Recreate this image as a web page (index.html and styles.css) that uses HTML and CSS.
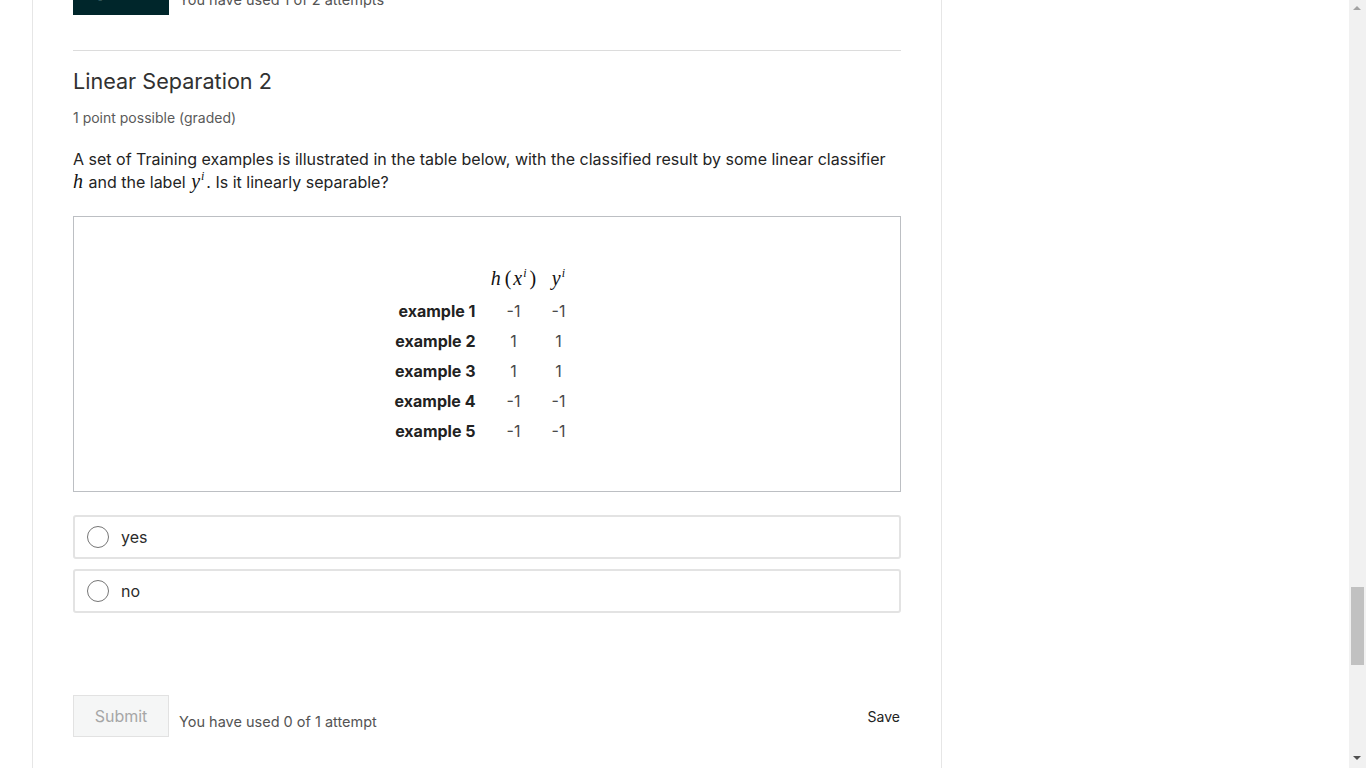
FILE: index.html
```html
<!DOCTYPE html>
<html lang="en">
<head>
<meta charset="utf-8">
<title>Linear Separation 2</title>
<link rel="stylesheet" href="styles.css">
</head>
<body>
<div class="viewport">
  <div class="column">
    <div class="prev-actions">
      <button class="btn-dark">Submit</button>
      <span class="attempts">You have used 1 of 2 attempts</span>
    </div>
    <hr class="divider">
    <h3 class="problem-title">Linear Separation 2</h3>
    <div class="points">1 point possible (graded)</div>
    <p class="prompt">A set of Training examples is illustrated in the table below, with the classified result by some linear classifier <span class="math inl-h">h</span> and the label <span class="math inl-y">y<sup>i</sup></span>. Is it linearly separable?</p>
    <div class="table-box">
      <table class="data">
        <thead>
          <tr>
            <th class="lbl"></th>
            <th class="c1"><span class="math">h</span><span class="mathup paren-l">(</span><span class="math">x<sup>i</sup></span><span class="mathup paren-r">)</span></th>
            <th class="c2"><span class="math">y<sup>i</sup></span></th>
          </tr>
        </thead>
        <tbody>
          <tr><th class="lbl">example 1</th><td class="c1">-1</td><td class="c2">-1</td></tr>
          <tr><th class="lbl">example 2</th><td class="c1">1</td><td class="c2">1</td></tr>
          <tr><th class="lbl">example 3</th><td class="c1">1</td><td class="c2">1</td></tr>
          <tr><th class="lbl">example 4</th><td class="c1">-1</td><td class="c2">-1</td></tr>
          <tr><th class="lbl">example 5</th><td class="c1">-1</td><td class="c2">-1</td></tr>
        </tbody>
      </table>
    </div>
    <div class="choices">
      <label class="choice"><span class="radio"></span><span class="choice-text">yes</span></label>
      <label class="choice"><span class="radio"></span><span class="choice-text">no</span></label>
    </div>
    <div class="actions">
      <div class="actions-left">
        <button class="btn-submit">Submit</button>
        <span class="attempts">You have used 0 of 1 attempt</span>
      </div>
      <span class="save">Save</span>
    </div>
  </div>
</div>
<div class="scrollbar">
  <div class="sb-arrow-up"></div>
  <div class="sb-thumb"></div>
  <div class="sb-arrow-down"></div>
</div>
</body>
</html>
```

FILE: styles.css
```css
html, body {
  margin: 0;
  padding: 0;
  height: 100%;
  overflow: hidden;
  background: #ffffff;
}
body {
  font-family: Inter, "Noto Sans", "Liberation Sans", sans-serif;
  color: #222222;
}
.viewport {
  width: 1349px;
  height: 768px;
  overflow: hidden;
}
.column {
  box-sizing: border-box;
  width: 910px;
  margin-left: 32px;
  margin-top: -27px;
  min-height: 900px;
  padding: 0 40px;
  border-left: 1px solid #e6e6e6;
  border-right: 1px solid #e6e6e6;
}
.prev-actions {
  display: flex;
  align-items: center;
  height: 42px;
}
.btn-dark {
  width: 96px;
  height: 42px;
  border: none;
  background: #00262b;
  color: #a9c9c4;
  font-family: inherit;
  font-size: 16px;
  padding: 0;
}
.attempts {
  margin-left: 10px;
  margin-top: 10px;
  font-size: 14.5px;
  color: #545454;
}
.divider {
  margin: 35px 0 0 0;
  border: none;
  border-top: 1px solid #dcdcdc;
  height: 0;
}
.problem-title {
  margin: 16px 0 0 0;
  font-size: 21.6px;
  line-height: 28px;
  font-weight: 400;
  color: #313131;
}
.points {
  margin-top: 13px;
  font-size: 14px;
  line-height: 20px;
  color: #5a5a5a;
}
.prompt {
  margin: 20px 0 0 0;
  padding-right: 10px;
  font-size: 16px;
  line-height: 23px;
  color: #242424;
}
.math {
  font-family: "Liberation Serif", "DejaVu Serif", serif;
  font-style: italic;
  font-size: 20px;
  color: #111111;
}
.inl-h, .inl-y {
  line-height: 1;
}
.inl-h {
  padding-right: 1px;
}
.inl-y {
  padding: 0 2px 0 1px;
}
.math sup {
  font-size: 12px;
  vertical-align: 8px;
  line-height: 0;
  padding-left: 1px;
}
.mathup {
  font-family: "Liberation Serif", "DejaVu Serif", serif;
  font-size: 20px;
  color: #111111;
}
.paren-l {
  padding: 0 2px 0 4px;
}
.paren-r {
  padding-left: 3px;
}
.table-box {
  margin-top: 22px;
  box-sizing: border-box;
  height: 276px;
  border: 1px solid #bcbfc3;
  padding-top: 43px;
}
.data {
  margin: 0 auto;
  border-collapse: collapse;
  font-size: 16px;
}
.data tr {
  height: 30px;
}
.data thead tr {
  height: 36px;
}
.data th, .data td {
  padding: 0;
}
.data .lbl {
  width: 80px;
  padding: 0 13px 0 9px;
  text-align: right;
  font-weight: 700;
  color: #222222;
  white-space: nowrap;
}
.data .c1 {
  width: 50px;
  text-align: center;
  color: #4a4a4a;
  font-weight: 400;
}
.data .c2 {
  width: 40px;
  padding-right: 10px;
  text-align: center;
  color: #4a4a4a;
  font-weight: 400;
}
.data thead .c1, .data thead .c2 {
  white-space: nowrap;
}
.choices {
  margin-top: 23px;
  display: flex;
  flex-direction: column;
  gap: 10px;
}
.choice {
  box-sizing: border-box;
  height: 44px;
  border: 2px solid #e3e3e3;
  border-radius: 3px;
  display: flex;
  align-items: center;
  padding-left: 12px;
}
.radio {
  box-sizing: border-box;
  width: 22px;
  height: 22px;
  border: 1px solid #767676;
  border-radius: 50%;
  background: #ffffff;
}
.choice-text {
  margin-left: 12px;
  font-size: 16px;
  color: #2b2b2b;
}
.actions {
  margin-top: 82px;
  display: flex;
  justify-content: space-between;
  align-items: center;
}
.actions-left {
  display: flex;
  align-items: center;
}
.btn-submit {
  box-sizing: border-box;
  width: 96px;
  height: 42px;
  border: 1px solid #e2e2e2;
  background: #f5f6f6;
  color: #a6a6a6;
  font-family: inherit;
  font-size: 16px;
  padding: 0;
}
.save {
  font-size: 14px;
  color: #222222;
  margin-right: 1px;
}
.scrollbar {
  position: fixed;
  top: 0;
  right: 0;
  width: 17px;
  height: 768px;
  background: #f1f1f1;
}
.sb-thumb {
  position: absolute;
  left: 2px;
  top: 587px;
  width: 13px;
  height: 78px;
  background: #c1c1c1;
}
.sb-arrow-up {
  position: absolute;
  left: 4px;
  top: 6px;
  width: 0;
  height: 0;
  border-left: 4px solid transparent;
  border-right: 4px solid transparent;
  border-bottom: 4px solid #a3a3a3;
}
.sb-arrow-down {
  position: absolute;
  left: 4px;
  top: 756px;
  width: 0;
  height: 0;
  border-left: 4px solid transparent;
  border-right: 4px solid transparent;
  border-top: 4px solid #505050;
}
```
